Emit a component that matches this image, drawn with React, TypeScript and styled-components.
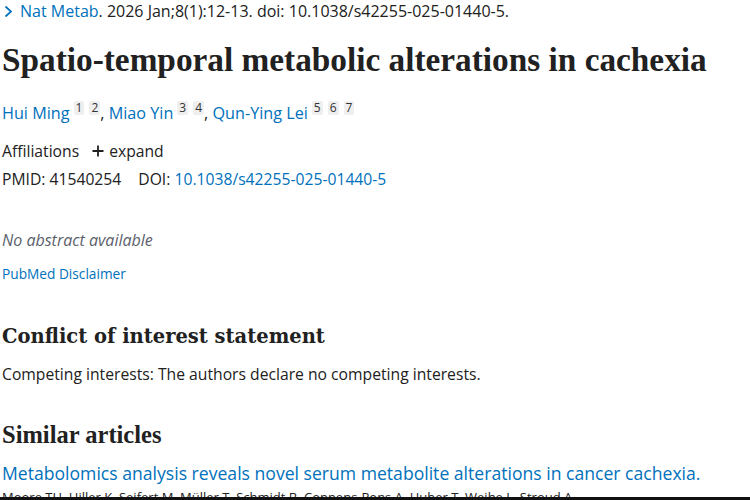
import React from "react";
import styled, { createGlobalStyle } from "styled-components";

const Global = createGlobalStyle`
  html, body { margin: 0; padding: 0; background: #ffffff; }
  body { font-family: "Open Sans", "Liberation Sans", sans-serif; color: #212121; }
  * { box-sizing: border-box; }
`;

const Page = styled.div`
  width: 750px;
  height: 500px;
  overflow: hidden;
  position: relative;
  padding: 0 0 0 2px;
  display: flex;
  flex-direction: column;
`;

const Link = styled.a`
  color: #0071bc;
  text-decoration: none;
`;

const Citation = styled.div`
  display: flex;
  align-items: center;
  height: 26px;
  font-size: 16px;
  color: #212121;
  gap: 7px;
  padding-left: 2px;
`;

const Chevron = styled.svg`
  width: 9px;
  height: 13px;
  flex: none;
`;

const Title = styled.h1`
  margin: 18px 0 0 0;
  font-family: "Liberation Serif", serif;
  font-weight: 700;
  font-size: 33.3px;
  line-height: 40px;
  color: #212121;
  white-space: nowrap;
`;

const Authors = styled.div`
  margin-top: 21px;
  height: 24px;
  font-size: 16.2px;
  line-height: 24px;
  color: #212121;
  white-space: nowrap;
`;

const Sup = styled.span<{ $first?: boolean }>`
  display: inline-block;
  background: #efefef;
  color: #333;
  font-size: 12px;
  line-height: 14px;
  height: 14px;
  padding: 0 2px;
  margin-left: ${(p) => (p.$first ? 4 : 5)}px;
  vertical-align: 7px;
  border-radius: 2px;
`;

const Row = styled.div<{ $mt: number; $gap: number }>`
  margin-top: ${(p) => p.$mt}px;
  height: 24px;
  font-size: 15.7px;
  line-height: 24px;
  display: flex;
  align-items: center;
  gap: ${(p) => p.$gap}px;
`;

const Expand = styled.span`
  display: inline-flex;
  align-items: center;
  gap: 5px;
`;

const PlusIcon = styled.svg`
  width: 12px;
  height: 12px;
  flex: none;
`;

const Muted = styled.div`
  margin-top: 37px;
  font-size: 16px;
  line-height: 24px;
  font-style: italic;
  color: #5b616b;
`;

const Small = styled.div`
  margin-top: 12px;
  font-size: 13.7px;
  line-height: 20px;
`;

const H2 = styled.h2<{ $mt: number; $size: number; $family: string }>`
  margin: ${(p) => p.$mt}px 0 0 0;
  font-family: ${(p) => p.$family};
  font-weight: 700;
  font-size: ${(p) => p.$size}px;
  line-height: 32px;
  color: #212121;
`;

const Body = styled.p`
  margin: 9px 0 0 0;
  font-size: 15.7px;
  line-height: 24px;
`;

const Article = styled.div`
  margin-top: 9px;
  font-size: 17.6px;
  line-height: 26px;
  white-space: nowrap;
`;

const Byline = styled.div`
  margin-top: 2px;
  font-size: 13px;
  line-height: 18px;
  color: #212121;
  white-space: nowrap;
`;

const BottomBar = styled.div`
  position: absolute;
  left: 0;
  right: 0;
  bottom: 0;
  height: 3px;
  background: #111;
`;

export default function App() {
  return (
    <>
      <Global />
      <Page>
        <Citation>
          <Chevron viewBox="0 0 9 13">
            <path d="M1.5 1.5 L7 6.5 L1.5 11.5" fill="none" stroke="#0071bc" strokeWidth="1.7" />
          </Chevron>
          <span>
            <Link href="#">Nat Metab</Link>. 2026 Jan;8(1):12-13. doi: 10.1038/s42255-025-01440-5.
          </span>
        </Citation>
        <Title>Spatio-temporal metabolic alterations in cachexia</Title>
        <Authors>
          <Link href="#">Hui Ming</Link>
          <Sup $first>1</Sup>
          <Sup>2</Sup>, <Link href="#">Miao Yin</Link>
          <Sup $first>3</Sup>
          <Sup>4</Sup>, <Link href="#">Qun-Ying Lei</Link>
          <Sup $first>5</Sup>
          <Sup>6</Sup>
          <Sup>7</Sup>
        </Authors>
        <Row $mt={14} $gap={13}>
          <span>Affiliations</span>
          <Expand>
            <PlusIcon viewBox="0 0 12 12">
              <path d="M6 0.5 V11.5 M0.5 6 H11.5" stroke="#212121" strokeWidth="1.8" />
            </PlusIcon>
            expand
          </Expand>
        </Row>
        <Row $mt={4} $gap={17}>
          <span>PMID: 41540254</span>
          <span>
            DOI: <Link href="#">10.1038/s42255-025-01440-5</Link>
          </span>
        </Row>
        <Muted>No abstract available</Muted>
        <Small>
          <Link href="#">PubMed Disclaimer</Link>
        </Small>
        <H2 $mt={37} $size={19.5} $family={'"DejaVu Serif", serif'}>
          Conflict of interest statement
        </H2>
        <Body>Competing interests: The authors declare no competing interests.</Body>
        <H2 $mt={33} $size={24.5} $family={'"Liberation Serif", serif'}>
          Similar articles
        </H2>
        <Article>
          <Link href="#">Metabolomics analysis reveals novel serum metabolite alterations in cancer cachexia.</Link>
        </Article>
        <Byline>Moore TH, Hiller K, Seifert M, Müller T, Schmidt B, Coppens-Pons A, Huber T, Weihe L, Stroud A.</Byline>
        <BottomBar />
      </Page>
    </>
  );
}
